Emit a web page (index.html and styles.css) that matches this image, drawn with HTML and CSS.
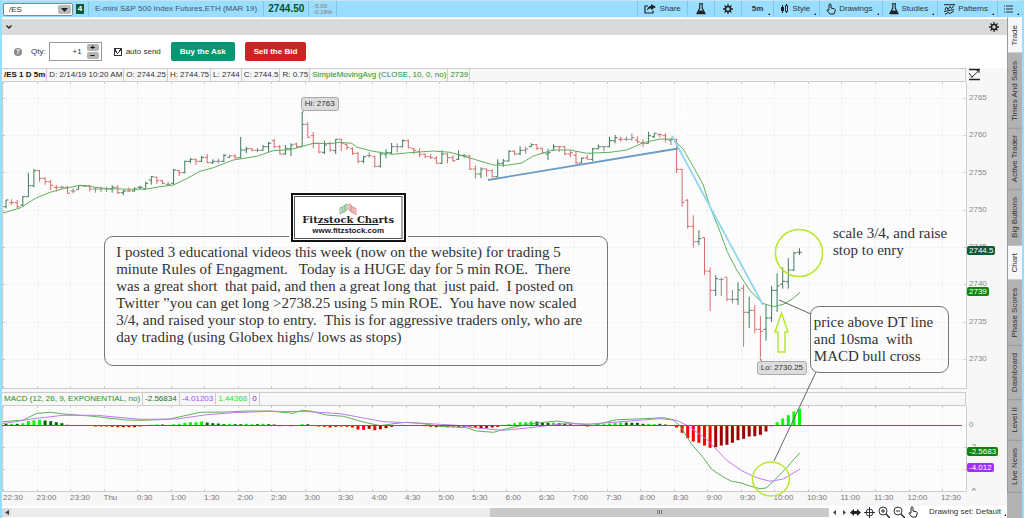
FILE: index.html
```html
<!DOCTYPE html>
<html lang="en">
<head>
  <meta charset="UTF-8" />
  <meta name="viewport" content="width=device-width, initial-scale=1.0" />
  <title>/ES Chart</title>
  <link rel="stylesheet" href="styles.css">
</head>
<body>
  <header class="topbar">
    <div class="symbol">
      <input type="text" value="/ES" aria-label="Symbol">
      <button class="drop" aria-label="Symbol list"><svg width="7" height="4" viewBox="0 0 7 4"><path d="M0 0h7L3.5 4z" fill="#222"/></svg></button>
    </div>
    <button class="link-badge">4</button>
    <div class="symbol-name">E-mini S&amp;P 500 Index Futures,ETH (MAR 19)</div>
    <div class="last">2744.50</div>
    <div class="change"><span>-5.00</span><span>-0.18%</span></div>
    <nav class="tools">
      <button>
        <svg width="12" height="10" viewBox="0 0 12 10"><path d="M4 2H1v7h8V6.500" fill="none" stroke="#222" stroke-width="1.200"/><path d="M7 0l5 3-5 3V4.200C5 4.200 4 5 3 7c0-3 1.500-5 4-5z" fill="#222"/></svg>
        Share
      </button>
      <button class="wide" aria-label="Edit studies"><svg width="10" height="12" viewBox="0 0 10 12"><path d="M3 .8h4M3.800 1v4L1 10.500h8L6.200 5V1" fill="none" stroke="#222" stroke-width="1.100"/><path d="M2.800 7.500h4.400l2.300 3.800h-9z" fill="#222"/></svg></button>
      <button class="wide" aria-label="Chart settings"><svg class="gear" width="10" height="10" viewBox="0 0 10 10"><circle cx="5" cy="5" r="2.500" fill="none" stroke="#222" stroke-width="1.500"/><path d="M5 0v2M5 8v2M0 5h2M8 5h2M1.500 1.500l1.400 1.400M7.100 7.100l1.400 1.400M1.500 8.500l1.400-1.400M7.100 2.900l1.400-1.400" stroke="#222" stroke-width="1.300"/></svg></button>
      <button class="menu frame">5m</button>
      <button class="menu">
        <svg width="9" height="10" viewBox="0 0 9 10"><path d="M2.500 1v8M6.500 0v9" stroke="#222"/><path d="M1 3h3v4H1z" fill="#222"/><path d="M5.500 1.500h2v6h-2z" fill="#9df" stroke="#222"/></svg>
        Style
      </button>
      <button class="menu">
        <svg width="10" height="12" viewBox="0 0 10 12"><path d="M3 7V1.500q1-1.500 2 0V5l3.500.8q1 .4.700 2L8 11H4L.8 7.200q.6-1.200 2.200.3" fill="none" stroke="#222"/></svg>
        Drawings
      </button>
      <button class="menu">
        <svg width="10" height="12" viewBox="0 0 10 12"><path d="M3 .8h4M3.800 1v4L1 10.500h8L6.200 5V1" fill="none" stroke="#222" stroke-width="1.100"/><path d="M2.800 7.500h4.400l2.300 3.800h-9z" fill="#222"/></svg>
        Studies
      </button>
      <button class="menu">
        <svg width="11" height="11" viewBox="0 0 11 11"><path d="M0 .7h11M1 6l1.500-3L4 5.500 6 2.500l1.500 2L10 1.500M0 7.500l10-2M1 10.500l3-2 2 1 4-2.500" fill="none" stroke="#222"/></svg>
        Patterns
      </button>
      <button class="menu" aria-label="Menu"><svg width="9" height="8" viewBox="0 0 9 8"><path d="M0 1h1M2 1h7M0 4h1M2 4h7M0 7h1M2 7h7" stroke="#333"/></svg></button>
    </nav>
  </header>

  <div class="workspace">
    <main class="panel">
      <div class="strip">
        <button aria-label="Collapse"><svg width="6" height="4" viewBox="0 0 6 4"><path d="M.5.5L3 3 5.500.5" fill="none" stroke="#222" stroke-width="1.400"/></svg></button>
        <button aria-label="Settings"><svg width="10" height="10" viewBox="0 0 10 10"><circle cx="5" cy="5" r="2.500" fill="none" stroke="#222" stroke-width="1.500"/><path d="M5 0v2M5 8v2M0 5h2M8 5h2M1.500 1.500l1.400 1.400M7.100 7.100l1.400 1.400M1.500 8.500l1.400-1.400M7.100 2.900l1.400-1.400" stroke="#222" stroke-width="1.300"/></svg></button>
      </div>

      <div class="order">
        <button class="help" aria-label="Help">?</button>
        <label for="qty">Qty:</label>
        <div class="qty">
          <input id="qty" type="text" value="+1">
          <div class="spin">
            <button aria-label="More">+</button>
            <button aria-label="Less">−</button>
          </div>
        </div>
        <label class="auto"><input type="checkbox" checked>auto send</label>
        <button class="buy">Buy the Ask</button>
        <button class="sell">Sell the Bid</button>
      </div>

      <section class="row">
        <div class="info">
          <b>/ES 1 D 5m</b><span>D: 2/14/19 10:20 AM</span><span>O: 2744.25</span><span>H: 2744.75</span><span>L: 2744</span><span>C: 2744.5</span><span>R: 0.75</span><span class="sma">SimpleMovingAvg (CLOSE, 10, 0, no)</span><span class="sma">2739</span>
        </div>
        <div class="axis-head">
          <svg width="13" height="13" viewBox="0 0 13 13"><path d="M1 1.500h11M1 11.500h11" stroke="#222" stroke-width="1.500"/><path d="M1 5l3 4L11 2.500M3 9h2M11 5V2.500H8.500" fill="none" stroke="#333"/></svg>
        </div>
      </section>

      <section class="row">
        <div class="plot price">
          <svg id="price" viewBox="2 82 964 307">
            <g class="grid"></g>
            <g class="bars"></g>
            <path class="avg"/>
            <path d="M488 180L678 148.500" stroke="#6c9cc6" stroke-width="1.800"/>
            <path d="M672 136L763 305" stroke="#93d6f0" stroke-width="1.800"/>
            <path d="M678 95h6v24h3.500L681 141l-6.500-22h3.500z" fill="none" stroke="#fff" stroke-width="1.300"/>
            <g fill="none" stroke="#b9e62e" stroke-width="1.500">
              <path d="M781.500 313l6.500 19h-3v20h-7v-20h-3z"/>
              <circle cx="799" cy="253" r="23.500"/>
              <ellipse cx="771" cy="479" rx="18.500" ry="17"/>
            </g>
            <path d="M779 300L811 314M816 372L774 461M302 113l3-5M760 358l2 4" stroke="#666" fill="none"/>
          </svg>
          <span class="tag hi">Hi: 2763</span>
          <span class="tag lo">Lo: 2730.25</span>
          <div class="note box main-note">I posted 3 educational videos this week (now on the website) for trading 5
minute Rules of Engagment.   Today is a HUGE day for 5 min ROE.  There
was a great short  that paid, and then a great long that  just paid.  I posted on
Twitter ”you can get long &gt;2738.25 using 5 min ROE.  You have now scaled
3/4, and raised your stop to entry.  This is for aggressive traders only, who are
day trading (using Globex highs/ lows as stops)</div>
          <div class="note scale-note">scale 3/4, and raise
stop to enry</div>
          <div class="note box cross-note">price above DT line
and 10sma  with
MACD bull cross</div>
          <div class="logo">
            <div class="logo-in">
              <svg width="18" height="12" viewBox="0 0 18 12"><path d="M1 5l2-1v6l-2 1zM4 3.500l2-1v6l-2 1zM6 2l2-1v6L6 8z" fill="none" stroke="#7fb17f"/><path d="M10 1l2 1v6l-2-1zM12 3l2 1v6l-2-1zM15 4.500l2 1v6l-2-1z" fill="none" stroke="#e08080"/></svg>
              <strong>Fit<u>zstock Cha</u>rts</strong>
              <a href="#">www.fitzstock.com</a>
            </div>
          </div>
        </div>
        <div class="axis price-axis">
          <span>2765</span><span>2760</span><span>2755</span><span>2750</span><span>2745</span><span>2740</span><span>2735</span><span>2730</span>
          <em class="mark last-mark">2744.5</em>
          <em class="mark avg-mark">2739</em>
        </div>
      </section>

      <section class="row macd-head">
        <div class="info">
          <span class="sma">MACD (12, 26, 9, EXPONENTIAL, no)</span><span class="macd">-2.56834</span><span class="signal">-4.01203</span><span class="diff">1.44368</span><span class="zero">0</span>
        </div>
        <div class="axis-head"></div>
      </section>

      <section class="row">
        <div class="plot">
          <svg id="macd" viewBox="2 405 964 86">
            <g class="grid"></g>
            <g class="bars"></g>
            <path class="line"/>
            <path class="sig"/>
            <path class="zero-line" d="M2 424.500H962"/>
          </svg>
        </div>
        <div class="axis macd-axis">
          <span>0</span><span>-2</span><span>-4</span><span>-6</span>
          <em class="mark macd-mark">-2.5683</em>
          <em class="mark signal-mark">-4.012</em>
        </div>
      </section>

      <section class="row">
        <ol class="times">
          <li>22:30</li><li>23:00</li><li>23:30</li><li>Thu</li><li>0:30</li><li>1:00</li><li>1:30</li><li>2:00</li><li>2:30</li><li>3:00</li><li>3:30</li><li>4:00</li><li>4:30</li><li>5:00</li><li>5:30</li><li>6:00</li><li>6:30</li><li>7:00</li><li>7:30</li><li>8:00</li><li>8:30</li><li>9:00</li><li>9:30</li><li>10:00</li><li>10:30</li><li>11:00</li><li>11:30</li><li>12:00</li><li>12:30</li>
        </ol>
        <div class="axis-head"></div>
      </section>

      <footer class="bottom">
        <button class="arrow" aria-label="Scroll left"><svg width="4" height="5" viewBox="0 0 4 5"><path d="M4 0v5L0 2.500z" fill="#444"/></svg></button>
        <div class="track"><div class="thumb"><i></i><i></i><i></i></div></div>
        <button class="step" aria-label="Back"><svg width="4" height="5" viewBox="0 0 4 5"><path d="M3 0v5L0 2.500z" fill="#444"/></svg></button>
        <button class="step" aria-label="Forward"><svg width="4" height="5" viewBox="0 0 4 5"><path d="M1 0v5l3-2.500z" fill="#444"/></svg></button>
        <button aria-label="Pan"><svg width="11" height="9" viewBox="0 0 11 9"><path d="M0 4.500L4 1v2h3V1l4 3.500L7 8V6H4v2z" fill="#222"/></svg></button>
        <button aria-label="Crosshair"><svg width="11" height="11" viewBox="0 0 11 11"><circle cx="5.500" cy="5.500" r="3.500" fill="none" stroke="#333"/><path d="M5.500 0v11M0 5.500h11" stroke="#333"/></svg></button>
        <button aria-label="Zoom in"><svg width="12" height="12" viewBox="0 0 12 12"><circle cx="5" cy="5" r="4" fill="none" stroke="#333"/><path d="M8 8l4 4" stroke="#333" stroke-width="1.500"/><path d="M3 5h4M5 3v4" stroke="#333"/></svg></button>
        <button aria-label="Zoom out"><svg width="12" height="12" viewBox="0 0 12 12"><circle cx="5" cy="5" r="4" fill="none" stroke="#333"/><path d="M8 8l4 4" stroke="#333" stroke-width="1.500"/><path d="M3 5h4" stroke="#333"/></svg></button>
        <button aria-label="Pointer"><svg width="10" height="12" viewBox="0 0 10 12"><path d="M3 7V1.500q1-1.500 2 0V5l3.500.8q1 .4.700 2L8 11H4L.8 7.200q.6-1.200 2.200.3" fill="none" stroke="#222"/></svg></button>
        <button class="menu drawing-set">Drawing set: Default</button>
      </footer>
    </main>

    <nav class="side">
      <button class="on">Trade</button>
      <button>Times And Sales</button>
      <button>Active Trader</button>
      <button>Big Buttons</button>
      <button class="on">Chart</button>
      <button>Phase Scores</button>
      <button>Dashboard</button>
      <button>Level II</button>
      <button>Live News</button>
    </nav>
  </div>
  <script src="chart.js"></script>
</body>
</html>
```

FILE: styles.css
```css
* {
  box-sizing: border-box;
}
body {
  margin: 0;
  padding: 0 2px 2px;
  background: #99ddff;
  color: #333;
  font: 8px/12px "Liberation Sans", Arial, sans-serif;
}
button, input {
  margin: 0;
  padding: 0;
  border: 0;
  background: none;
  color: inherit;
  font: inherit;
}
button {
  display: flex;
  align-items: center;
  justify-content: center;
}
svg {
  display: block;
  flex: none;
}

/* top bar */
.topbar {
  display: flex;
  height: 18px;
  border-top: 1px solid #c4e2f0;
  border-bottom: 1px solid #e8f4fa;
}
.symbol {
  display: flex;
  align-items: center;
  width: 70px;
  height: 13px;
  margin: 2px 0 0 1px;
  padding: 0 1px 0 5px;
  background: #fff;
  border: 1px solid #888;
  border-radius: 2px;
}
.symbol input {
  flex: 1;
  min-width: 0;
}
.drop {
  width: 13px;
  height: 9px;
  background: #bbb;
  border-radius: 2px;
}
.link-badge {
  width: 8px;
  height: 10px;
  margin: 3px 4px 0 3px;
  background: #0a5c38;
  color: #fff;
  font-weight: bold;
}
.symbol-name, .last, .change {
  display: flex;
  align-items: center;
  padding: 0 4px;
  border-left: 1px solid #80c4e8;
}
.symbol-name {
  padding: 0 6px;
  color: #456;
}
.last {
  color: #045030;
  font-size: 10px;
  font-weight: bold;
}
.change {
  flex-direction: column;
  align-items: flex-start;
  justify-content: center;
  color: #967070;
  border-right: 1px solid #80c4e8;
  font-size: 6px;
  line-height: 6px;
}
.tools {
  display: flex;
  margin-left: auto;
}
.tools button {
  gap: 3px;
  padding: 0 6px;
  border-left: 1px solid #80c4e8;
}
.tools .wide {
  padding: 0 8px;
}
.tools .menu {
  padding-right: 9px;
}
.tools .frame {
  padding: 0 10px;
  font-weight: bold;
}
.menu {
  position: relative;
}
.menu::after {
  content: "";
  position: absolute;
  right: 3px;
  bottom: 2px;
  border: 1px solid #222;
  border-top-color: transparent;
  border-left-color: transparent;
}

.workspace {
  display: flex;
}
.panel {
  flex: 1;
  min-width: 0;
  background: #f7f7f7;
}
.strip {
  display: flex;
  justify-content: space-between;
  height: 17px;
  padding: 0 8px 0 4px;
  border-top: 1px solid #fff;
  background: #dadada;
}

/* order entry */
.order {
  display: flex;
  align-items: center;
  height: 33px;
  padding-left: 12px;
  background: #fff;
}
.help {
  width: 8px;
  height: 8px;
  margin-right: 9px;
  border-radius: 50%;
  background: #888;
  color: #fff;
  font-size: 7px;
  font-weight: bold;
}
.qty {
  display: flex;
  align-items: center;
  width: 53px;
  height: 19px;
  margin: 0 12px 0 3px;
  padding-right: 2px;
  border: 1px solid #999;
}
.qty input {
  flex: 1;
  min-width: 0;
  margin-right: 5px;
  text-align: right;
}
.spin {
  display: grid;
  gap: 1px;
}
.spin button {
  width: 12px;
  height: 7px;
  border-radius: 2px;
  background: #b4b4b4;
  color: #000;
  font-weight: bold;
}
.auto {
  display: flex;
  align-items: center;
  gap: 4px;
  margin-right: 10px;
}
.auto input {
  appearance: none;
  width: 8px;
  height: 8px;
  border: 1px solid #333;
}
.auto input:checked {
  background: conic-gradient(from 315deg at 45% 80%, #333 20deg, transparent 20deg 70deg, #333 70deg 90deg, transparent 90deg);
}
.buy, .sell {
  height: 19px;
  margin-right: 10px;
  padding: 0 9px;
  border-radius: 2px;
  background: #059673;
  color: #fff;
  font-weight: bold;
}
.sell {
  background: #cb2424;
}

/* charts */
.row {
  display: flex;
}
.info {
  display: flex;
  flex: 1;
  height: 14px;
  border: 1px solid #ccc;
  border-left: 0;
  white-space: nowrap;
}
.info > * {
  padding: 0 1px 0 2px;
  border-right: 1px solid #ccc;
}
.info b {
  color: #111;
}
.info .sma {
  color: #259225;
}
.macd-head .info > * {
  padding: 0 2px;
}
.info .macd {
  color: #207020;
}
.info .signal {
  color: #a54cff;
}
.info .diff {
  color: #20e820;
}
.info .zero {
  color: #7030a8;
}
.axis-head {
  width: 41px;
  padding-left: 2px;
}
.plot {
  position: relative;
  flex: 1;
  background: #fcfcfc;
}
.plot svg {
  width: 100%;
  height: auto;
}
.price {
  z-index: 1;
}
.price > svg {
  overflow: visible;
}
.price .logo svg {
  width: 18px;
}
.grid line {
  stroke: #e2e2e2;
  stroke-dasharray: 1 3;
}
.grid .tick, .grid .edge {
  stroke: #ccc;
  stroke-dasharray: none;
}
.bars path {
  fill: none;
  stroke: #3f7a5c;
}
.bars .r {
  stroke: #d96b6b;
}
.bars .k {
  stroke: #888;
}
.avg, .line {
  fill: none;
  stroke: #5fb05f;
}
.sig {
  fill: none;
  stroke: #bf7bf5;
}
.zero-line {
  stroke: #8e3cc4;
}
.tag {
  position: absolute;
  padding: 0 3px;
  border: 1px solid #aaa;
  border-radius: 3px;
  background: #dcdcdc;
}
.hi {
  left: 31%;
  top: 5%;
}
.lo {
  left: 78.300%;
  top: 91%;
}
.note {
  position: absolute;
  color: #333;
  font: 15px/17px "Liberation Serif", "Times New Roman", serif;
  white-space: pre;
}
.box {
  border: 1px solid #777;
  border-radius: 9px;
}
.main-note {
  left: 10.600%;
  top: 50.200%;
  width: 52.300%;
  padding: 7px 11px 19px;
}
.scale-note {
  left: 86.200%;
  top: 46.500%;
}
.cross-note {
  left: 83.800%;
  top: 73%;
  width: 14.400%;
  padding: 7px 3px;
}
.logo {
  position: absolute;
  left: 30%;
  top: 36.200%;
  padding: 1px;
  border: 2px solid #111;
  outline: 2px solid #fff;
  background: #fff;
}
.logo-in {
  display: flex;
  flex-direction: column;
  align-items: center;
  width: 109px;
  height: 43px;
  padding-top: 6px;
  border: 1px solid #555;
  border-right: 2px solid #aaa;
}
.logo strong {
  color: #222;
  font: bold 10px/10px "DejaVu Serif", serif;
}
.logo a {
  color: #222;
  font-weight: bold;
  text-decoration: none;
}
.axis {
  position: relative;
  display: flex;
  flex-direction: column;
  justify-content: space-between;
  width: 41px;
  padding-left: 2px;
  border-left: 1px solid #ccc;
  color: #888;
}
.price-axis {
  padding-top: 10px;
  padding-bottom: 24px;
}
.macd-axis {
  justify-content: flex-start;
  padding-top: 8px;
  height: 85px;
  line-height: 22px;
  overflow: hidden;
}
.mark {
  position: absolute;
  left: 0;
  padding: 0 2px;
  border-radius: 2px;
  background: #0b5a30;
  color: #fff;
  font-style: normal;
  line-height: 9px;
}
.last-mark {
  top: 53.500%;
}
.avg-mark {
  top: 66.700%;
  background: #0a8a0a;
}
.macd-mark {
  top: 48%;
  background: #0a850a;
}
.signal-mark {
  top: 67%;
  background: #a030f5;
}
.macd-head {
  padding-top: 3px;
}
.times {
  display: flex;
  flex: 1;
  min-width: 0;
  height: 14px;
  margin: 0;
  padding: 0 0 0 1px;
  list-style: none;
  color: #777;
}
.times li {
  flex: 0 0 3.480%;
  width: 0;
  white-space: nowrap;
}

/* scroll row */
.bottom {
  display: flex;
  align-items: center;
  gap: 3px;
  height: 12px;
  background: #fff;
}
.bottom .arrow {
  width: 9px;
  height: 9px;
  margin-right: -3px;
  background: #ddd;
}
.bottom .step {
  width: 6px;
}
.track {
  flex: 1;
  height: 9px;
  background: #ececec;
}
.thumb {
  display: flex;
  align-items: center;
  justify-content: center;
  gap: 1px;
  width: 41.500%;
  height: 9px;
  margin-left: auto;
  background: #c9c9c9;
}
.thumb i {
  width: 1px;
  height: 4px;
  background: #777;
}
.drawing-set {
  margin-left: 8px;
  padding-right: 6px;
  white-space: nowrap;
}
.drawing-set::after {
  right: 1px;
}

/* side tabs */
.side {
  display: flex;
  flex-direction: column;
  width: 15px;
  background: #b2b2b2;
}
.side button {
  padding: 7px 0;
  border-top: 1px solid #999;
  border-right: 1px solid #999;
  writing-mode: vertical-rl;
  white-space: nowrap;
  transform: rotate(180deg);
  line-height: 14px;
}
.side .on {
  background: #f7f7f7;
}
```

FILE: chart.js
```js
// one entry per 5m bar: direction, open, high, low, close
// (levels are thirds of a unit below the 90 line)
const ohlc = `g350,330,355,330 r338,328,345,338 r338,330,355,350 g345,318,350,320 g320,248,320,287 g287,237,292,242
r242,240,275,265 r265,262,284,275 r275,270,300,286 r292,285,305,292 k292,287,296,292 r292,288,310,310
k303,295,310,303 g298,287,298,287 g287,285,290,287 r287,285,304,297 k297,292,308,297 k297,290,306,297
k297,290,306,297 g297,286,308,292 r292,286,312,308 g308,300,316,303 r303,293,305,303 g303,292,305,297
g292,287,298,292 g297,275,298,280 g270,258,284,260 r262,260,282,272 r272,270,283,280 k283,275,288,283
g280,237,284,240 r242,240,258,248 g248,212,250,214 g214,204,220,208 r208,206,225,214 g214,198,216,202
r202,192,220,218 g218,208,222,214 k214,206,220,214 g214,192,216,196 k202,194,205,198 r198,192,206,203
g203,141,205,180 g180,170,190,176 r176,174,184,181 k181,174,187,181 g181,165,182,170 g170,156,186,160
r152,147,175,170 r170,165,193,192 g192,165,194,176 g176,160,198,165 r162,158,175,170 g170,66,170,103
r103,97,143,142 r137,126,175,160 r160,158,190,186 g187,152,192,165 r160,156,185,180 g182,147,192,148
r148,147,183,160 r163,160,180,172 r176,172,195,190 r190,187,220,214 g214,197,220,200 k197,187,203,197
r200,197,232,229 g229,185,232,192 g192,178,205,188 g188,159,192,170 k170,160,187,170 g170,148,172,152
r152,148,175,173 r176,173,193,181 r185,175,202,193 r193,190,204,200 r200,192,207,203 r205,198,220,220
g220,181,222,192 r192,190,220,203 r203,196,216,212 g208,181,210,196 g196,193,203,198 r198,195,240,237
r237,226,265,252 g252,232,264,237 r237,236,260,242 r242,238,262,260 g260,208,262,220 g220,207,230,213
g213,181,215,184 r184,181,195,192 g192,169,195,181 k181,170,192,177 g170,160,170,164 r164,162,180,175
r175,174,192,188 g192,176,210,188 g181,163,182,170 r170,168,186,170 r170,168,195,192 r192,181,202,188
r196,183,222,219 g219,203,220,204 r204,195,208,208 g208,174,214,176 g176,163,178,170 k170,168,184,170
g170,141,172,152 g152,135,160,143 r148,140,155,148 k148,140,153,148 k148,130,152,143 r150,139,160,155
r158,148,171,160 g160,125,160,137 g140,130,144,130 r134,130,142,134 r137,130,157,148 k152,143,165,148
r148,147,249,238 r238,237,350,337 r331,327,416,409 r409,376,473,455 g455,421,466,446 r443,442,555,543
r544,532,663,601 g601,556,618,566 k568,563,618,568 r562,562,634,628 k628,600,640,628 g628,577,645,600
r595,584,770,667 g667,620,714,661 r661,645,730,718 r718,678,802,724 g718,645,752,684 g684,588,696,601
g601,550,666,588 g583,532,596,574 g575,505,596,540 g540,485,543,489 g487,475,495,487`;

// g/d rising and fading green, r/m growing and shrinking red
const hist = `5d 5g 5d 7g 13g 16g 17g 15d 13d 10d 7d 2d 0d 0d 0d 0d -3r -3r -3r -4m -5r -5m -5r -5m -3r -1r 2g 3g 3d 1d
4g 5g 8g 10g 10g 12g 9d 7d 6d 4d 5g 4d 4d 5g 4g 4d 5g 4d 3d -2m -1m -2r -1m 4g 4d -1r -3r -4r -6r -4m
-3r -4r -6r -12r -13r -10m -14r -11m -8m -4m -1m 2g 1d 0d 0d -2r -4r -5m -4m -5m -4r -4m -4r -4r -6r -8m -8m -6m -4m 0d
4g 7g 10g 10g 12g 12d 10d 8d 8g 7d 5d 4d 1d -1m -3r 0d 4g 4g 6g 8g 9g 9d 8d 8d 5d 5g 4g 5d 3d 0d
-6r -22r -38r -48r -52r -60r -67r -65m -60m -58m -52m -44m -40m -33m -32m -28m -18m -2m 10g 21g 31g 42g 50g`;
const histColors = { g: '#0f0', d: '#006400', r: '#f00', m: '#a00000' };

const sma = `9,369 60,354 90,335 110,323 150,307 190,296 240,286 320,296 400,298 440,297 480,290 520,285 560,266 600,244
640,233 700,210 770,199 820,182 870,179 940,160 990,161 1020,157 1055,160 1070,171 1110,182 1175,193 1230,188 1300,183
1350,187 1420,207 1480,225 1520,226 1565,219 1600,198 1660,180 1710,180 1760,190 1830,187 1880,180 1930,158 1980,147
2020,148 2050,178 2080,230 2110,285 2130,350 2160,425 2182,485 2210,540 2250,602 2288,640 2320,650 2350,643 2380,625 2400,607`;
const macdLine = `9,107 70,102 110,82 150,79 190,84 270,90 380,102 430,103 505,100 550,90 600,79 680,78 740,75 810,75 880,82
905,73 930,75 980,87 1030,91 1090,108 1140,119 1190,112 1220,109 1260,112 1320,121 1400,125 1430,135 1480,139 1520,128
1590,113 1670,105 1730,113 1780,118 1850,101 1930,98 1990,95 2020,101 2040,120 2075,175 2110,215 2135,250 2170,273
2195,286 2220,290 2250,300 2280,308 2298,306 2325,281 2360,245 2380,222 2400,200`;
const signalLine = `9,113 100,98 190,88 290,88 420,100 530,99 620,86 700,80 810,76 930,77 1020,83 1070,92 1150,107 1270,112
1370,118 1430,126 1510,133 1590,125 1690,113 1770,114 1850,108 1980,98 2030,103 2065,120 2120,160 2180,223 2225,254
2270,275 2310,286 2350,279 2400,249`;

const barX = i => 6 + i * 5.588;

function curve(points, base) {
  return 'M' + points.split(/\s+/).map(p => {
    const [x, y] = p.split(',');
    return `${(x / 3).toFixed(1)} ${(base + y / 3).toFixed(1)}`;
  }).join('L');
}

function drawGrid(svg, top, bottom, levels) {
  let out = '';
  for (let i = 0; i < 29; i++) {
    const x = Math.floor(3.7 + i * 33.53) + 0.5;
    out += `<line x1="${x}" x2="${x}" y1="${top}" y2="${bottom}"/>`;
    out += `<line class="tick" x1="${x}" x2="${x}" y1="${top}" y2="${top + 2}"/>`;
    out += `<line class="tick" x1="${x}" x2="${x}" y1="${bottom - 3}" y2="${bottom}"/>`;
  }
  levels.forEach(y => {
    out += `<line x1="2" x2="966" y1="${y}" y2="${y}"/>`;
    out += `<line class="tick" x1="2" x2="5" y1="${y}" y2="${y}"/>`;
    out += `<line class="tick" x1="964" x2="966" y1="${y}" y2="${y}"/>`;
  });
  out += `<line class="edge" x1="2" x2="966" y1="${bottom - 0.5}" y2="${bottom - 0.5}"/>`;
  out += `<line class="edge" x1="2.5" x2="2.5" y1="${top}" y2="${bottom}"/>`;
  svg.querySelector('.grid').innerHTML = out;
}

const price = document.getElementById('price');
drawGrid(price, 82, 389, [98.5, 135.5, 172.5, 210.5, 247.5, 284.5, 322.5, 359.5]);
price.querySelector('.bars').innerHTML = ohlc.split(/\s+/).map((bar, i) => {
  const [o, h, l, c] = bar.slice(1).split(',').map(v => (90 + v / 3).toFixed(1));
  const x = barX(i).toFixed(1);
  return `<path class="${bar[0]}" d="M${x} ${h}V${l}M${x} ${o}h-2.5M${x} ${c}h2.5"/>`;
}).join('');
price.querySelector('.avg').setAttribute('d', curve(sma, 90));

const macd = document.getElementById('macd');
drawGrid(macd, 405, 491, [446.5, 468.5]);
macd.querySelector('.bars').innerHTML = hist.split(/\s+/).map((bar, i) => {
  const h = parseInt(bar) / 3;
  const y = h > 0 ? 424.5 - h : 424.5;
  return `<rect x="${(barX(i) - 1.5).toFixed(1)}" y="${y.toFixed(1)}" width="3" height="${Math.abs(h).toFixed(1)}" fill="${histColors[bar.slice(-1)]}"/>`;
}).join('');
macd.querySelector('.line').setAttribute('d', curve(macdLine, 385));
macd.querySelector('.sig').setAttribute('d', curve(signalLine, 385));
```
